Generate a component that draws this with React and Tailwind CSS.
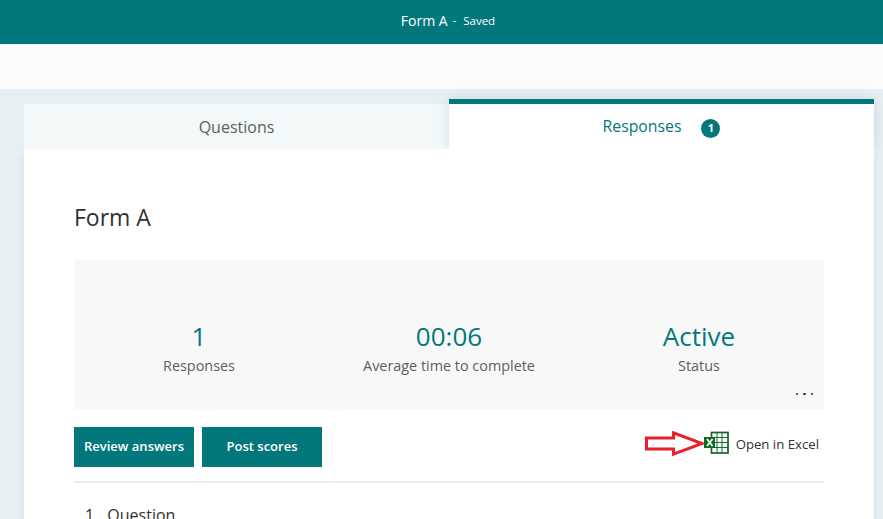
export default function App() {
  return (
    <div className="h-[519px] w-[883px] overflow-hidden bg-[#e8eff2] font-['Open_Sans','Noto_Sans',sans-serif] text-[#323130]">
      <header className="flex h-[44px] items-center justify-center bg-[#03787c] pl-[13px] pb-[3px] text-white">
        <span className="text-[14px]">Form A</span>
        <span className="ml-[5px] text-[11px]">-</span>
        <span className="ml-[7px] text-[11.500px]">Saved</span>
      </header>
      <div className="h-[45px] bg-[#fbfbfb]" />
      <main className="mx-[24px] mt-[10px] w-[850px]">
        <div className="flex h-[50px] items-end">
          <div className="flex h-[45px] w-[425px] items-center justify-center bg-[#f3f9f9] text-[16px] text-[#605e5c]">Questions</div>
          <div className="flex h-[50px] w-[425px] items-center justify-center border-t-[5px] border-[#03787c] bg-white text-[#03787c] shadow-[0_0_12px_rgba(0,60,80,0.14)]">
            <span className="text-[15.800px]">Responses</span>
            <span className="ml-[20px] mt-[3px] flex h-[19px] w-[19px] items-center justify-center rounded-full bg-[#03787c] text-[11px] font-bold text-white">1</span>
          </div>
        </div>
        <section className="relative h-[400px] bg-white px-[50px] shadow-[0_8px_8px_rgba(0,60,80,0.1)]">
          <h1 className="flex h-[111px] items-center pt-[26px] text-[23px] leading-none text-[#323130]">Form A</h1>
          <div className="relative grid h-[150px] grid-cols-3 bg-[#f8f8f8] pt-[58px] text-center">
            <Stat value="1" label="Responses" />
            <Stat value="00:06" label="Average time to complete" />
            <Stat value="Active" label="Status" />
            <span className="absolute bottom-[15px] right-[11px] flex gap-[5px]">
              <i className="h-[2.500px] w-[2.500px] rounded-full bg-[#323130]" />
              <i className="h-[2.500px] w-[2.500px] rounded-full bg-[#323130]" />
              <i className="h-[2.500px] w-[2.500px] rounded-full bg-[#323130]" />
            </span>
          </div>
          <div className="flex h-[73px] items-start justify-between border-b-2 border-[#ebebeb] pt-[17px]">
            <div className="flex gap-[8px]">
              <button className="h-[40px] w-[120px] bg-[#03787c] text-[13px] font-semibold text-white">Review answers</button>
              <button className="h-[40px] w-[120px] bg-[#03787c] text-[13px] font-semibold text-white">Post scores</button>
            </div>
            <div className="flex items-start pr-[5px] pt-[4px]">
              <svg width="84" height="26" viewBox="0 0 84 26" className="mr-[7px]">
                <path d="M1.500 7 H28.500 V1.800 L57 12.500 L28.500 23.200 V18 H1.500 Z" fill="none" stroke="#e8212b" strokeWidth="3" />
                <rect x="66.500" y="1.500" width="16.500" height="20.500" fill="#fff" stroke="#14622a" strokeWidth="1.700" />
                <path d="M70 6.500 H83 M70 11.500 H83 M70 16.500 H83 M72 1.500 V22 M77 1.500 V22" stroke="#14702f" strokeWidth="1" />
                <rect x="59" y="6" width="11" height="11" fill="#0e6b22" />
                <path d="M62 8 L67.500 15 M67.500 8 L62 15" stroke="#fff" strokeWidth="1.800" />
              </svg>
              <span className="mt-[4px] text-[13.200px] leading-[18px] text-[#323130]">Open in Excel</span>
            </div>
          </div>
          <div className="mt-[22px] flex pl-[11px] text-[16px] leading-[20px]">
            <span>1.</span>
            <span className="ml-[9px]">Question</span>
          </div>
        </section>
      </main>
    </div>
  );
}

function Stat({ value, label }) {
  return (
    <div>
      <div className="text-[26px] leading-[36px] text-[#03787c]">{value}</div>
      <div className="mt-[2px] text-[14.400px] leading-[20px] text-[#605e5c]">{label}</div>
    </div>
  );
}
